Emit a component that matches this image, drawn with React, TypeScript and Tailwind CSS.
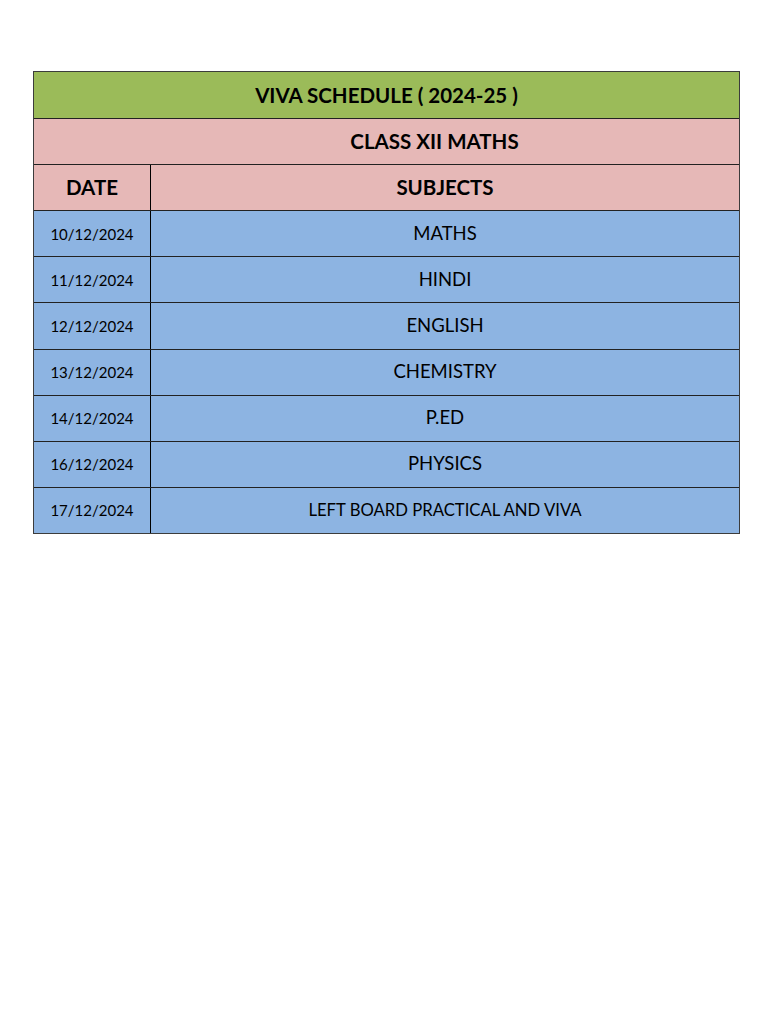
import React from "react";

const rows: [string, string, string][] = [
  ["10/12/2024", "MATHS", "text-[18.5px]"],
  ["11/12/2024", "HINDI", "text-[18.5px]"],
  ["12/12/2024", "ENGLISH", "text-[18.5px]"],
  ["13/12/2024", "CHEMISTRY", "text-[18.5px]"],
  ["14/12/2024", "P.ED", "text-[18.5px]"],
  ["16/12/2024", "PHYSICS", "text-[18.5px]"],
  ["17/12/2024", "LEFT BOARD PRACTICAL AND VIVA", "text-[16.7px]"],
];

export default function App() {
  return (
    <div
      className="w-[768px] h-[1024px] bg-white pt-[71px] pl-[33px] text-black"
      style={{ fontFamily: "Lato, 'Open Sans', sans-serif" }}
    >
      <div className="w-[707px] border border-[#3c3c3c] flex flex-col">
        <div className="h-[46.1px] bg-[#9bbb59] flex items-center justify-center font-bold text-[20.5px]">
          VIVA SCHEDULE ( 2024-25 )
        </div>
        <div className="h-[46.1px] bg-[#e6b8b7] border-t border-[#222] flex items-center justify-center pl-[96px] font-bold text-[20.5px]">
          CLASS XII MATHS
        </div>
        <div className="h-[46.1px] bg-[#e6b8b7] border-t border-[#222] flex font-bold text-[20.5px]">
          <div className="w-[117px] border-r border-black flex items-center justify-center">DATE</div>
          <div className="flex-1 flex items-center justify-center">SUBJECTS</div>
        </div>
        {rows.map(([d, s, cls]) => (
          <div key={d} className="h-[46.1px] bg-[#8db4e2] border-t border-[#222] flex">
            <div className="w-[117px] border-r border-black flex items-center justify-center text-[15px]">{d}</div>
            <div className={`flex-1 flex items-center justify-center ${cls}`}>{s}</div>
          </div>
        ))}
      </div>
    </div>
  );
}
